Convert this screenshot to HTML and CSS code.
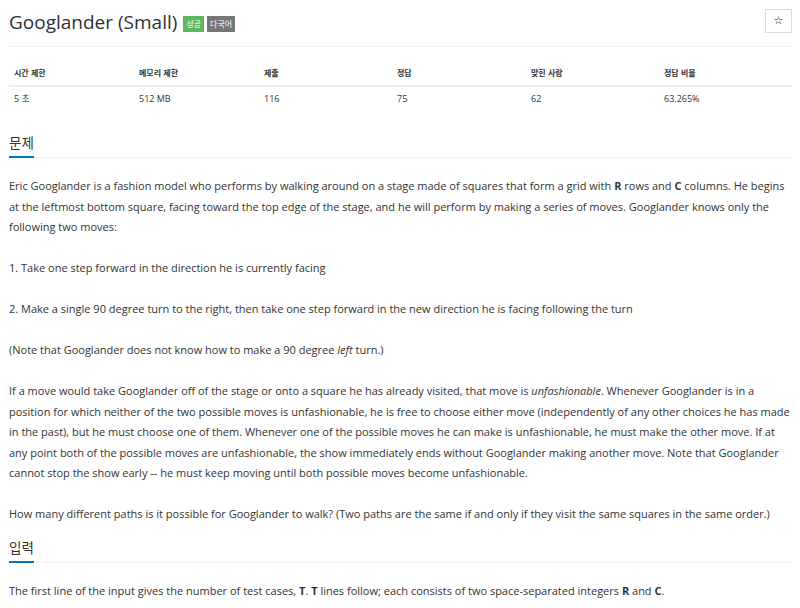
FILE: index.html
```html
<!DOCTYPE html>
<html lang="ko">
<head>
<meta charset="utf-8">
<title>Googlander (Small)</title>
<link rel="stylesheet" href="styles.css">
</head>
<body>
<div class="page">
  <div class="title-row">
    <h1 class="title">Googlander (Small) <span class="badge badge-ok">성공</span><span class="badge badge-lang">다국어</span></h1>
    <button class="star" type="button">☆</button>
  </div>
  <table class="info">
    <colgroup>
      <col class="w125"><col class="w125"><col class="w133"><col class="w134"><col class="w133"><col>
    </colgroup>
    <thead>
      <tr>
        <th>시간 제한</th>
        <th>메모리 제한</th>
        <th>제출</th>
        <th>정답</th>
        <th>맞힌 사람</th>
        <th>정답 비율</th>
      </tr>
    </thead>
    <tbody>
      <tr>
        <td>5 초</td>
        <td>512 MB</td>
        <td>116</td>
        <td>75</td>
        <td>62</td>
        <td>63.265%</td>
      </tr>
    </tbody>
  </table>
  <section class="section first">
    <div class="headline"><h2>문제</h2></div>
    <div class="text">
      <p>Eric Googlander is a fashion model who performs by walking around on a stage made of squares that form a grid with <b>R</b> rows and <b>C</b> columns. He begins at the leftmost bottom square, facing toward the top edge of the stage, and he will perform by making a series of moves. Googlander knows only the following two moves:</p>
      <p>1. Take one step forward in the direction he is currently facing</p>
      <p>2. Make a single 90 degree turn to the right, then take one step forward in the new direction he is facing following the turn</p>
      <p>(Note that Googlander does not know how to make a 90 degree <i>left</i> turn.)</p>
      <p>If a move would take Googlander off of the stage or onto a square he has already visited, that move is <i>unfashionable</i>. Whenever Googlander is in a position for which neither of the two possible moves is unfashionable, he is free to choose either move (independently of any other choices he has made in the past), but he must choose one of them. Whenever one of the possible moves he can make is unfashionable, he must make the other move. If at any point both of the possible moves are unfashionable, the show immediately ends without Googlander making another move. Note that Googlander cannot stop the show early -- he must keep moving until both possible moves become unfashionable.</p>
      <p>How many different paths is it possible for Googlander to walk? (Two paths are the same if and only if they visit the same squares in the same order.)</p>
    </div>
  </section>
  <section class="section">
    <div class="headline"><h2>입력</h2></div>
    <div class="text">
      <p>The first line of the input gives the number of test cases, <b>T</b>. <b>T</b> lines follow; each consists of two space-separated integers <b>R</b> and <b>C</b>.</p>
    </div>
  </section>
</div>
</body>
</html>
```
FILE: styles.css
```css
html, body {
  margin: 0;
  padding: 0;
  background: #fff;
}
body {
  font-family: "Open Sans", "Noto Sans CJK KR", sans-serif;
  color: #333;
  font-size: 11px;
}
.page {
  padding: 0 8px 0 9px;
}
.title-row {
  display: flex;
  justify-content: space-between;
  align-items: flex-start;
  padding-top: 8px;
  padding-bottom: 10px;
  border-bottom: 1px solid #eee;
}
.title {
  margin: 0;
  font-size: 19px;
  font-weight: 400;
  line-height: 28px;
  color: #2d3138;
  display: flex;
  align-items: center;
}
.badge {
  display: inline-block;
  font-family: "Noto Sans CJK KR", sans-serif;
  font-size: 8px;
  line-height: 16px;
  height: 16px;
  padding: 0 3px;
  color: #fff;
  margin-top: 3px;
}
.badge-ok {
  background: #5cb85c;
  margin-left: 6px;
}
.badge-lang {
  background: #777;
  margin-left: 3px;
}
.star {
  width: 27px;
  height: 24px;
  margin-top: 1px;
  border: 1px solid #ddd;
  background: #fff;
  font-size: 11px;
  line-height: 22px;
  color: #222;
  padding: 0;
  font-family: "DejaVu Sans", sans-serif;
}
.info {
  width: 100%;
  table-layout: fixed;
  border-collapse: collapse;
  margin-top: 14px;
}
.w125 { width: 125px; }
.w133 { width: 133px; }
.w134 { width: 134px; }
.info th {
  font-family: "Noto Sans CJK KR", sans-serif;
  font-weight: 700;
  text-align: left;
  padding: 5px;
  line-height: 14px;
  border-bottom: 2px solid #eee;
  font-size: 8px;
  color: #333;
}
.info td {
  padding: 5px;
  line-height: 14px;
  font-size: 9px;
  color: #333;
}
.section {
  margin-top: 12px;
}
.section.first {
  margin-top: 21px;
}
.headline {
  border-bottom: 1px solid #eee;
}
.headline h2 {
  display: inline-block;
  margin: 0 0 -1px;
  font-family: "Noto Sans CJK KR", sans-serif;
  font-size: 13.5px;
  font-weight: 400;
  line-height: 20px;
  padding-bottom: 4px;
  border-bottom: 2px solid #0076c0;
  color: #333;
}
.text {
  padding-top: 18px;
}
.text p {
  margin: 0 0 20.5px;
  line-height: 20.5px;
  font-size: 11px;
}
.text p:last-child {
  margin-bottom: 0;
}
```
